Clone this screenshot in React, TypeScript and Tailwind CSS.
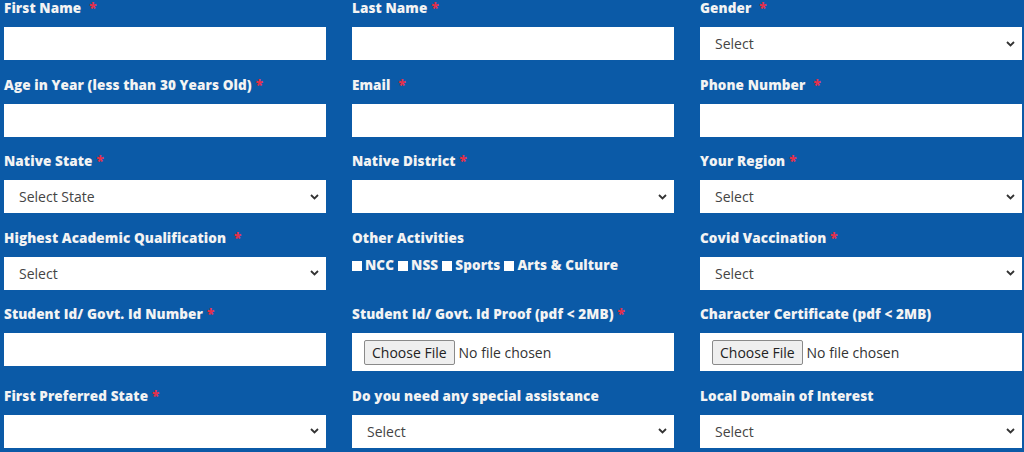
import React from "react";

type Kind = "text" | "select" | "file" | "checks";

type Field = {
  label: string;
  req?: boolean;
  wide?: boolean;
  kind: Kind;
  placeholder?: string;
};

const FIELDS: Field[] = [
  { label: "First Name", req: true, wide: true, kind: "text" },
  { label: "Last Name", req: true, kind: "text" },
  { label: "Gender", req: true, wide: true, kind: "select", placeholder: "Select" },
  { label: "Age in Year (less than 30 Years Old)", req: true, kind: "text" },
  { label: "Email", req: true, wide: true, kind: "text" },
  { label: "Phone Number", req: true, wide: true, kind: "text" },
  { label: "Native State", req: true, kind: "select", placeholder: "Select State" },
  { label: "Native District", req: true, kind: "select", placeholder: "" },
  { label: "Your Region", req: true, kind: "select", placeholder: "Select" },
  { label: "Highest Academic Qualification", req: true, wide: true, kind: "select", placeholder: "Select" },
  { label: "Other Activities", kind: "checks" },
  { label: "Covid Vaccination", req: true, kind: "select", placeholder: "Select" },
  { label: "Student Id/ Govt. Id Number", req: true, kind: "text" },
  { label: "Student Id/ Govt. Id Proof (pdf < 2MB)", req: true, kind: "file" },
  { label: "Character Certificate (pdf < 2MB)", kind: "file" },
  { label: "First Preferred State", req: true, kind: "select", placeholder: "" },
  { label: "Do you need any special assistance", kind: "select", placeholder: "Select" },
  { label: "Local Domain of Interest", kind: "select", placeholder: "Select" },
];

function Chevron() {
  return (
    <svg
      className="pointer-events-none absolute right-[7px] top-1/2 -translate-y-1/2"
      width="9"
      height="6"
      viewBox="0 0 9 6"
      fill="none"
    >
      <path d="M1 1l3.5 3.5L8 1" stroke="#333" strokeWidth="1.8" />
    </svg>
  );
}

function Control({ f }: { f: Field }) {
  if (f.kind === "text") {
    return <input type="text" className="h-[33px] w-full bg-white px-3 text-[14px] text-[#333] outline-none" />;
  }
  if (f.kind === "select") {
    return (
      <div className="relative">
        <select className="h-[33px] w-full appearance-none bg-white pl-[15px] pr-6 text-[14px] text-[#444] outline-none">
          <option>{f.placeholder}</option>
        </select>
        <Chevron />
      </div>
    );
  }
  if (f.kind === "file") {
    return (
      <div className="flex h-[38px] items-center bg-white pl-[12px]">
        <input
          type="file"
          className="text-[14px] text-[#333] file:mr-[4px] file:h-[25px] file:rounded-[2px] file:border file:border-[#8a8a8a] file:bg-[#efefef] file:px-[7px] file:text-[14px] file:text-[#222]"
        />
      </div>
    );
  }
  return (
    <div className="flex h-[18px] items-center text-[13.5px] font-[800] tracking-[0.1px] text-[#f3f3f3]">
      {["NCC", "NSS", "Sports", "Arts & Culture"].map((c, i) => (
        <label key={c} className={`flex items-center ${i > 0 ? "ml-[4px]" : ""}`}>
          <input type="checkbox" className="mr-[3px] h-[10px] w-[10px] appearance-none bg-white" />
          {c}
        </label>
      ))}
    </div>
  );
}

export default function App() {
  return (
    <div
      className="h-[452px] w-[1024px] overflow-hidden bg-[#0b5aa7]"
      style={{ fontFamily: "'Open Sans', sans-serif" }}
    >
      <div className="grid grid-cols-[321.5px_321.5px_321.5px] gap-x-[26.5px] gap-y-[16.5px] pl-[4px]">
        {FIELDS.map((f) => (
          <div key={f.label}>
            <div className="mb-[11px] h-[16px] text-[13.5px] leading-[16px] font-[800] tracking-[0.1px] whitespace-nowrap text-[#f3f3f3]">
              {f.label}
              {f.req && <span className={`text-[#e2314c] ${f.wide ? "ml-[8px]" : "ml-[4px]"}`}>*</span>}
            </div>
            <Control f={f} />
          </div>
        ))}
      </div>
    </div>
  );
}
